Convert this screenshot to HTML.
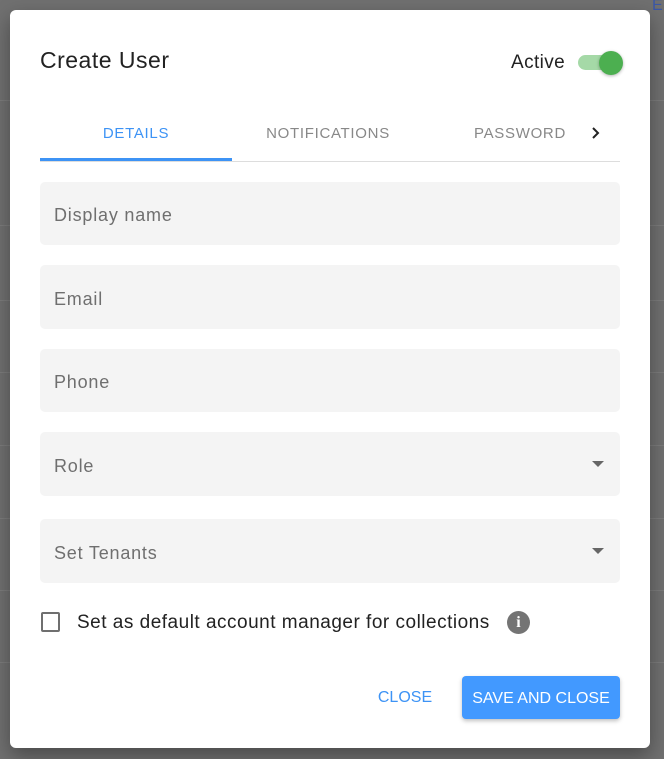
<!DOCTYPE html>
<html><head><style>
*{box-sizing:border-box;margin:0;padding:0}
body{width:664px;height:759px;background:#707070;font-family:"Liberation Sans",sans-serif;position:relative;overflow:hidden}
.bgline{position:absolute;left:0;width:664px;height:1px;background:#7c7c7c}
.dlg{position:absolute;left:10px;top:10px;width:640px;height:738px;background:#fff;border-radius:6px;box-shadow:0 8px 20px rgba(0,0,0,.35)}
.abs{position:absolute}
.title{left:30px;top:37px;font-size:23px;color:#222;letter-spacing:.5px}
.field{position:absolute;left:30px;width:580px;background:#f4f4f4;border-radius:5px;font-size:18px;color:#6f6f6f;padding-left:14px;padding-top:4px;display:flex;align-items:center;letter-spacing:.8px}
.tri{position:absolute;right:16px;top:50%;margin-top:-3px;width:0;height:0;border-left:6px solid transparent;border-right:6px solid transparent;border-top:6px solid #666}
.tab{position:absolute;top:115px;font-size:15px;color:#888;text-align:center;width:192px;letter-spacing:.7px}
</style></head><body>
<div class="bgline" style="top:100px"></div>
<div class="bgline" style="top:225px"></div>
<div class="bgline" style="top:300px"></div>
<div class="bgline" style="top:372px"></div>
<div class="bgline" style="top:445px"></div>
<div class="bgline" style="top:518px"></div>
<div class="bgline" style="top:590px"></div>
<div class="bgline" style="top:662px"></div>
<div class="abs" style="left:652px;top:-3px;font-size:16px;color:#3b57a8">E</div>
<div class="dlg">
 <div class="abs title">Create User</div>
 <div class="abs" style="left:501px;top:42px;font-size:19px;color:#222;letter-spacing:.4px">Active</div>
 <div class="abs" style="left:568px;top:45px;width:38px;height:15px;border-radius:8px;background:#a5d9a7"></div>
 <div class="abs" style="left:589px;top:41px;width:24px;height:24px;border-radius:50%;background:#4caf50;box-shadow:0 1px 3px rgba(0,0,0,.3)"></div>
 <div class="tab" style="left:30px;color:#3d93f5">DETAILS</div>
 <div class="tab" style="left:222px">NOTIFICATIONS</div>
 <div class="tab" style="left:414px">PASSWORD</div>
 <svg class="abs" style="left:580px;top:116px" width="12" height="14" viewBox="0 0 12 14"><path d="M3 2 L8 7 L3 12" stroke="#222" stroke-width="2" fill="none"/></svg>
 <div class="abs" style="left:30px;top:151px;width:580px;height:1px;background:#ddd"></div>
 <div class="abs" style="left:30px;top:148px;width:192px;height:3px;background:#3d93f5"></div>
 <div class="field" style="top:172px;height:63px">Display name</div>
 <div class="field" style="top:255px;height:64px">Email</div>
 <div class="field" style="top:339px;height:63px">Phone</div>
 <div class="field" style="top:422px;height:64px">Role<div class="tri"></div></div>
 <div class="field" style="top:509px;height:64px">Set Tenants<div class="tri"></div></div>
 <div class="abs" style="left:31px;top:602px;width:19px;height:20px;border:2px solid #6f6f6f;border-radius:2px"></div>
 <div class="abs" style="left:67px;top:602px;font-size:19px;color:#222;letter-spacing:.5px">Set as default account manager for collections</div>
 <div class="abs" style="left:497px;top:601px;width:23px;height:23px;border-radius:50%;background:#747474;color:#fff;font-weight:bold;font-size:16px;text-align:center;line-height:23px;font-family:'Liberation Serif',serif">i</div>
 <div class="abs" style="left:355px;top:679px;width:80px;text-align:center;font-size:16px;color:#3d93f5">CLOSE</div>
 <div class="abs" style="left:452px;top:666px;width:158px;height:43px;background:#4299ff;border-radius:4px;color:#fff;font-size:16px;text-align:center;line-height:45px;box-shadow:0 2px 4px rgba(0,0,0,.25)">SAVE AND CLOSE</div>
</div>
</body></html>
